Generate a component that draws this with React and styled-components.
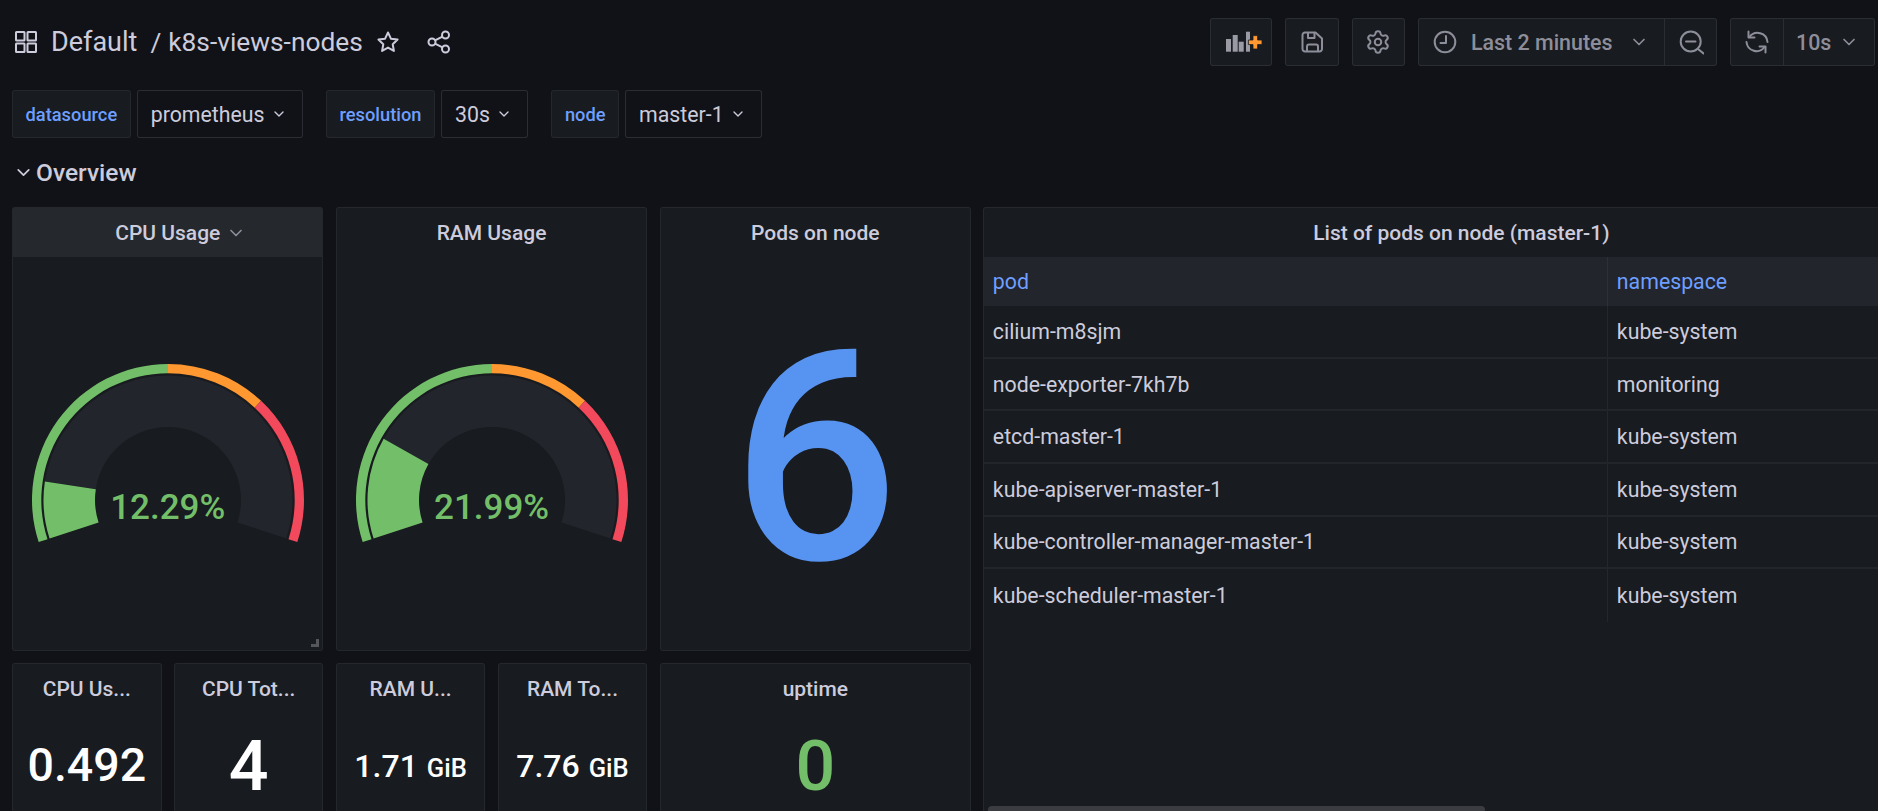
import React from "react"
import styled, { createGlobalStyle } from "styled-components"
import { ChevronDown, Settings } from "lucide-react"

const GlobalStyle = createGlobalStyle`
	html, body {
		margin: 0;
		height: 100%;
		overflow: hidden;
		background: #111217;
	}
	* {
		box-sizing: border-box;
	}
	body {
		font-family: Roboto, "Liberation Sans", sans-serif;
		color: #ccccdc;
	}
`

const polar = (cx, cy, r, deg) => {
	const a = ((deg - 90) * Math.PI) / 180
	return [cx + r * Math.cos(a), cy + r * Math.sin(a)]
}

const arcPath = (cx, cy, inner, outer, from, to) => {
	const [x1, y1] = polar(cx, cy, outer, from)
	const [x2, y2] = polar(cx, cy, outer, to)
	const [x3, y3] = polar(cx, cy, inner, to)
	const [x4, y4] = polar(cx, cy, inner, from)
	const large = to - from > 180 ? 1 : 0
	return `M${x1} ${y1}A${outer} ${outer} 0 ${large} 1 ${x2} ${y2}L${x3} ${y3}A${inner} ${inner} 0 ${large} 0 ${x4} ${y4}Z`
}

function Gauge({ percent, value }) {
	const start = -108
	const end = 108
	const valueEnd = start + (end - start) * (percent / 100)
	return (
		<GaugeWrap>
			<GaugeSvg viewBox="0 0 300 200">
				<path d={arcPath(150, 140, 126.7, 136, start, 0)} fill="#73bf69" />
				<path d={arcPath(150, 140, 126.7, 136, 0, 43.2)} fill="#ff9830" />
				<path d={arcPath(150, 140, 126.7, 136, 43.2, end)} fill="#f2495c" />
				<path d={arcPath(150, 140, 73, 124.5, valueEnd, end)} fill="#22252b" />
				<path d={arcPath(150, 140, 73, 124.5, start, valueEnd)} fill="#73bf69" />
			</GaugeSvg>
			<GaugeValue>{value}</GaugeValue>
		</GaugeWrap>
	)
}

function AppsIcon() {
	return (
		<AppsSvg width="22" height="22" viewBox="0 0 22 22" fill="none" stroke="#ccccdc" strokeWidth="2">
			<rect x="1" y="1" width="8.500" height="8.500" rx="0.500" />
			<rect x="12.500" y="1" width="8.500" height="8.500" rx="0.500" />
			<rect x="1" y="12.500" width="8.500" height="8.500" rx="0.500" />
			<rect x="12.500" y="12.500" width="8.500" height="8.500" rx="0.500" />
		</AppsSvg>
	)
}

function StarIcon() {
	return (
		<StarSvg width="24" height="24" viewBox="0 0 24 24" fill="none" stroke="#ccccdc" strokeWidth="2" strokeLinejoin="round">
			<path d="M12 2.500l2.900 6.200 6.700.9-4.900 4.600 1.200 6.700-5.900-3.300-5.900 3.300 1.200-6.700-4.900-4.600 6.700-.9z" />
		</StarSvg>
	)
}

function ShareIcon() {
	return (
		<ShareSvg width="24" height="24" viewBox="0 0 24 24" fill="none" stroke="#ccccdc" strokeWidth="2">
			<circle cx="18.500" cy="5" r="3.500" />
			<circle cx="5" cy="12" r="3.500" />
			<circle cx="18.500" cy="19" r="3.500" />
			<path d="M8 10.400l7.500-3.800M8 13.600l7.500 3.800" />
		</ShareSvg>
	)
}

function AddPanelIcon() {
	return (
		<AddPanelSvg width="38" height="24" viewBox="0 0 38 24">
			<rect x="2" y="9" width="5" height="12.700" fill="#9a9aa5" />
			<rect x="8.700" y="5" width="5" height="16.700" fill="#9a9aa5" />
			<rect x="14.700" y="11.700" width="5" height="10" fill="#9a9aa5" />
			<rect x="22" y="1.700" width="4" height="20" fill="#9a9aa5" />
			<path d="M29 5.600h4.600v4.400h4.400v4.600h-4.400v4.400H29v-4.400h-4.600V10H29z" fill="#ff9830" stroke="#181b1f" strokeWidth="0.800" />
		</AddPanelSvg>
	)
}

function SaveIcon() {
	return (
		<svg width="24" height="24" viewBox="0 0 24 24" fill="none" stroke="#8e8e9a" strokeWidth="2" strokeLinejoin="round">
			<path d="M5 2.500h10.500l6.500 6v10.500a2.500 2.500 0 0 1-2.500 2.500H5a2.500 2.500 0 0 1-2.500-2.500V5A2.500 2.500 0 0 1 5 2.500z" />
			<path d="M8 2.500v5.500h6.500V3M7 21.500v-5a2 2 0 0 1 2-2h7a2 2 0 0 1 2 2v5" />
		</svg>
	)
}

function ClockIcon() {
	return (
		<svg width="24" height="24" viewBox="0 0 24 24" fill="none" stroke="#8e8e9a" strokeWidth="2" strokeLinecap="round" strokeLinejoin="round">
			<circle cx="12" cy="12" r="10.300" />
			<path d="M13 6v7H7.500" />
		</svg>
	)
}

function ZoomOutIcon() {
	return (
		<svg width="26" height="26" viewBox="0 0 26 26" fill="none" stroke="#8e8e9a" strokeWidth="2" strokeLinecap="round">
			<circle cx="12.700" cy="12.500" r="10" />
			<path d="M8 12.500h9.500M20 20l5.500 4.500" />
		</svg>
	)
}

function SyncIcon() {
	return (
		<svg width="24" height="24" viewBox="0 0 24 24" fill="none" stroke="#8e8e9a" strokeWidth="2" strokeLinecap="round" strokeLinejoin="round">
			<path d="M4.500 7A10 10 0 0 1 22.500 12" />
			<path d="M3.500 1.500v6h6" />
			<path d="M19.500 17A10 10 0 0 1 1.500 12" />
			<path d="M20.500 22.500v-6h-6" />
		</svg>
	)
}

const pods = [
	["cilium-m8sjm", "kube-system"],
	["node-exporter-7kh7b", "monitoring"],
	["etcd-master-1", "kube-system"],
	["kube-apiserver-master-1", "kube-system"],
	["kube-controller-manager-master-1", "kube-system"],
	["kube-scheduler-master-1", "kube-system"],
]

export default function App() {
	return (
		<Page>
			<GlobalStyle />
			<TopBar>
				<TitleGroup>
					<AppsIcon />
					<Crumb>Default</Crumb>
					<CrumbSlash>/</CrumbSlash>
					<CrumbName>k8s-views-nodes</CrumbName>
					<StarIcon />
					<ShareIcon />
				</TitleGroup>
				<Actions>
					<ToolButton $width={62}><AddPanelIcon /></ToolButton>
					<ToolButton $width={53.5}><SaveIcon /></ToolButton>
					<ToolButton $width={53.5}><Settings size={26} strokeWidth={1.85} color="#8e8e9a" /></ToolButton>
					<ButtonGroup>
						<TimePicker>
							<ClockIcon />
							<TimeText>Last 2 minutes</TimeText>
							<ChevronDown size={20} strokeWidth={2} />
						</TimePicker>
						<GroupIconCell $divider><ZoomOutIcon /></GroupIconCell>
					</ButtonGroup>
					<ButtonGroup>
						<GroupIconCell><SyncIcon /></GroupIconCell>
						<RefreshCell>
							<TimeText>10s</TimeText>
							<ChevronDown size={20} strokeWidth={2} />
						</RefreshCell>
					</ButtonGroup>
				</Actions>
			</TopBar>

			<Variables>
				<VarGroup>
					<VarLabel>datasource</VarLabel>
					<VarSelect>prometheus<ChevronDown size={16} strokeWidth={2} /></VarSelect>
				</VarGroup>
				<VarGroup>
					<VarLabel>resolution</VarLabel>
					<VarSelect>30s<ChevronDown size={16} strokeWidth={2} /></VarSelect>
				</VarGroup>
				<VarGroup>
					<VarLabel>node</VarLabel>
					<VarSelect>master-1<ChevronDown size={16} strokeWidth={2} /></VarSelect>
				</VarGroup>
			</Variables>

			<RowTitle><ChevronDown size={21} strokeWidth={2} />Overview</RowTitle>

			<Grid>
				<Panel $col="1 / span 2" $row="1">
					<PanelHeader $hover>CPU Usage<HeaderChevron size={20} strokeWidth={2} /></PanelHeader>
					<Gauge percent={12.29} value="12.29%" />
					<ResizeHandle />
				</Panel>
				<Panel $col="3 / span 2" $row="1">
					<PanelHeader>RAM Usage</PanelHeader>
					<Gauge percent={21.99} value="21.99%" />
				</Panel>
				<Panel $col="5" $row="1">
					<PanelHeader>Pods on node</PanelHeader>
					<BigSix>6</BigSix>
				</Panel>
				<TablePanel>
					<PanelHeader>List of pods on node (master-1)</PanelHeader>
					<HeadRow>
						<HeadCell>pod</HeadCell>
						<HeadCell>namespace</HeadCell>
					</HeadRow>
					<TableBody>
						{pods.map(([pod, namespace]) => (
							<BodyRow key={pod}>
								<BodyCell>{pod}</BodyCell>
								<BodyCell>{namespace}</BodyCell>
							</BodyRow>
						))}
					</TableBody>
					<ScrollThumb />
				</TablePanel>

				<Panel $col="1" $row="2">
					<PanelHeader>CPU Us...</PanelHeader>
					<StatBody><StatValue $size={46.500}>0.492</StatValue></StatBody>
				</Panel>
				<Panel $col="2" $row="2">
					<PanelHeader>CPU Tot...</PanelHeader>
					<StatBody><StatValue $size={70}>4</StatValue></StatBody>
				</Panel>
				<Panel $col="3" $row="2">
					<PanelHeader>RAM U...</PanelHeader>
					<StatBody><StatValue $size={32}>1.71<StatUnit>GiB</StatUnit></StatValue></StatBody>
				</Panel>
				<Panel $col="4" $row="2">
					<PanelHeader>RAM To...</PanelHeader>
					<StatBody><StatValue $size={32}>7.76<StatUnit>GiB</StatUnit></StatValue></StatBody>
				</Panel>
				<Panel $col="5" $row="2">
					<PanelHeader>uptime</PanelHeader>
					<StatBody><StatValue $size={70} $color="#73bf69">0</StatValue></StatBody>
				</Panel>
			</Grid>
		</Page>
	)
}

const Page = styled.div`
	height: 811px;
	overflow: hidden;
	background: #111217;
	padding-left: 12px;
`

const TopBar = styled.div`
	display: flex;
	align-items: center;
	justify-content: space-between;
	height: 84px;
	margin-bottom: 6px;
	padding-right: 3px;
`

const TitleGroup = styled.div`
	display: flex;
	align-items: center;
`

const AppsSvg = styled.svg`
	flex: none;
	margin-left: 3px;
`

const StarSvg = styled.svg`
	flex: none;
	margin-left: 13px;
`

const ShareSvg = styled.svg`
	flex: none;
	margin-left: 27px;
`

const AddPanelSvg = styled.svg`
	flex: none;
	margin-left: 3px;
`

const Crumb = styled.span`
	font-size: 27px;
	margin-left: 14px;
`

const CrumbSlash = styled.span`
	font-size: 26.300px;
	margin-left: 13px;
`

const CrumbName = styled.span`
	font-size: 26.300px;
	margin-left: 7px;
`

const Actions = styled.div`
	display: flex;
	align-items: center;
	gap: 13px;
`

const ToolButton = styled.div`
	display: flex;
	align-items: center;
	justify-content: center;
	width: ${(p) => p.$width}px;
	height: 48px;
	background: #181b1f;
	border: 1px solid rgba(204, 204, 220, 0.1);
	border-radius: 3px;
`

const ButtonGroup = styled.div`
	display: flex;
	height: 48px;
	background: #181b1f;
	border: 1px solid rgba(204, 204, 220, 0.1);
	border-radius: 3px;
	color: #8e8e9a;
`

const TimePicker = styled.div`
	display: flex;
	align-items: center;
	width: 245px;
	padding-left: 14px;
`

const TimeText = styled.span`
	font-size: 21.400px;
	font-weight: 500;
	margin: 0 17px 0 14px;
`

const GroupIconCell = styled.div`
	display: flex;
	align-items: center;
	justify-content: center;
	width: 52px;
	border-left: ${(p) => (p.$divider ? "1px solid rgba(204, 204, 220, 0.1)" : "none")};
`

const RefreshCell = styled.div`
	display: flex;
	align-items: center;
	width: 91px;
	border-left: 1px solid rgba(204, 204, 220, 0.1);
	span {
		margin-left: 12px;
		margin-right: 8px;
	}
`

const Variables = styled.div`
	display: flex;
	gap: 23.500px;
	height: 48px;
`

const VarGroup = styled.div`
	display: flex;
	gap: 6px;
`

const VarLabel = styled.div`
	display: flex;
	align-items: center;
	padding: 0 12.500px;
	background: #181b1f;
	border: 1px solid rgba(204, 204, 220, 0.07);
	border-radius: 3px;
	color: #6e9fff;
	font-size: 18.300px;
	font-weight: 500;
`

const VarSelect = styled.div`
	display: flex;
	align-items: center;
	gap: 6px;
	padding: 0 15px 0 13px;
	background: #111217;
	border: 1px solid rgba(204, 204, 220, 0.15);
	border-radius: 3px;
	font-size: 21.300px;
`

const RowTitle = styled.div`
	display: flex;
	align-items: center;
	gap: 2px;
	height: 27px;
	margin-top: 21px;
	padding-left: 1px;
	font-size: 24.500px;
	font-weight: 500;
`

const Grid = styled.div`
	display: grid;
	grid-template-columns: 149.600px 149.600px 149.600px 149.600px 311.500px 956px;
	grid-template-rows: 444px 156px;
	column-gap: 12.300px;
	row-gap: 12px;
	margin-top: 21px;
`

const Panel = styled.div`
	position: relative;
	display: flex;
	flex-direction: column;
	min-width: 0;
	background: #181b1f;
	border: 1px solid rgba(204, 204, 220, 0.07);
	border-radius: 3px;
	grid-column: ${(p) => p.$col};
	grid-row: ${(p) => p.$row};
`

const TablePanel = styled(Panel)`
	grid-column: 6;
	grid-row: 1 / span 2;
`

const PanelHeader = styled.div`
	display: flex;
	align-items: center;
	justify-content: center;
	flex: none;
	gap: 6px;
	height: 49px;
	font-size: 21px;
	font-weight: 500;
	white-space: nowrap;
	background: ${(p) => (p.$hover ? "#25282d" : "transparent")};
`

const HeaderChevron = styled(ChevronDown)`
	flex: none;
	margin-right: -26px;
	color: #8e8e9a;
`

const GaugeWrap = styled.div`
	position: relative;
	display: flex;
	justify-content: center;
	padding-top: 103px;
`

const GaugeSvg = styled.svg`
	flex: none;
	width: 300px;
	height: 200px;
`

const GaugeValue = styled.div`
	position: absolute;
	top: 232.500px;
	left: 0;
	right: 0;
	text-align: center;
	font-size: 35px;
	line-height: 1;
	font-weight: 500;
	color: #73bf69;
`

const ResizeHandle = styled.div`
	position: absolute;
	right: 3px;
	bottom: 3px;
	width: 8px;
	height: 8px;
	border-right: 3px solid #55565c;
	border-bottom: 3px solid #55565c;
`

const BigSix = styled.div`
	font-size: 294px;
	font-weight: 500;
	line-height: 1;
	text-align: center;
	color: #5794f2;
	margin-top: 55px;
`

const HeadRow = styled.div`
	display: grid;
	grid-template-columns: 623px 1fr;
	height: 49.300px;
	background: #22252b;
`

const TableBody = styled.div`
	display: flex;
	flex-direction: column;
`

const BodyRow = styled.div`
	display: grid;
	grid-template-columns: 623px 1fr;
	height: 52.600px;
	&:not(:last-child) {
		border-bottom: 2px solid rgba(204, 204, 220, 0.06);
	}
`

const HeadCell = styled.div`
	display: flex;
	align-items: center;
	padding-left: 8.500px;
	font-size: 21.300px;
	color: #6e9fff;
	&:nth-child(2) {
		border-left: 1px solid rgba(204, 204, 220, 0.07);
	}
`

const BodyCell = styled.div`
	display: flex;
	align-items: center;
	padding-left: 8.500px;
	font-size: 21.300px;
	&:nth-child(2) {
		border-left: 1px solid rgba(204, 204, 220, 0.07);
	}
`

const ScrollThumb = styled.div`
	position: absolute;
	left: 4px;
	top: 598px;
	width: 497px;
	height: 12px;
	background: #3a3c42;
	border-radius: 4px 4px 0 0;
`

const StatBody = styled.div`
	display: flex;
	flex: 1;
	align-items: center;
	justify-content: center;
`

const StatValue = styled.div`
	display: flex;
	align-items: baseline;
	font-size: ${(p) => p.$size}px;
	font-weight: 500;
	line-height: 1;
	color: ${(p) => p.$color || "#ffffff"};
`

const StatUnit = styled.span`
	margin-left: 9px;
	font-size: 25.500px;
`
